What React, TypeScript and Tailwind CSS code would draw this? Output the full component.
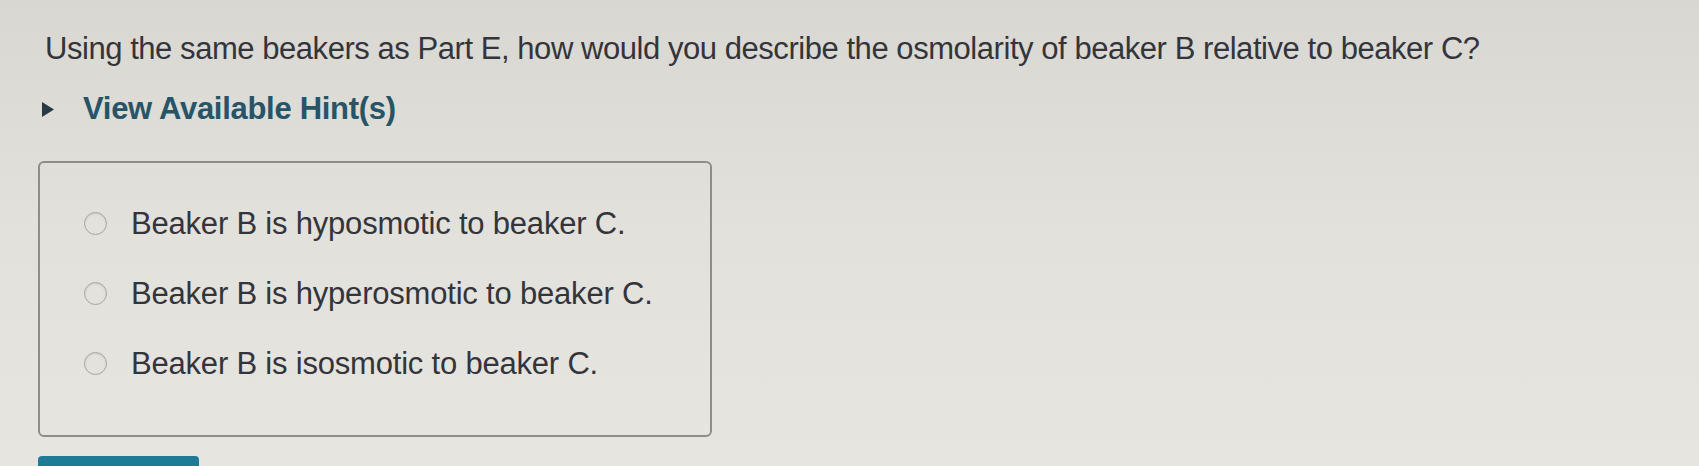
import React from "react";

const options = [
  "Beaker B is hyposmotic to beaker C.",
  "Beaker B is hyperosmotic to beaker C.",
  "Beaker B is isosmotic to beaker C.",
];

export default function App() {
  return (
    <div
      className="relative h-[466px] w-full overflow-hidden bg-gradient-to-b from-[#d8d7d2] via-[#e2e1dc] to-[#e6e5e0] text-[#34343b]"
      style={{ fontFamily: '"Liberation Sans", Arial, sans-serif' }}
    >
      <div className="flex flex-col pl-[45px] pt-[29px]">
        <p className="text-[31px] leading-[40px] tracking-[-0.45px]">
          Using the same beakers as Part E, how would you describe the osmolarity of beaker B relative to beaker C?
        </p>
        <div className="mt-[23px] flex items-center gap-[28px]">
          <svg width="14" height="17" viewBox="0 0 14 17" className="-ml-[4px] shrink-0">
            <path d="M1 1 L13 8.5 L1 16 Z" fill="#2a3a44" />
          </svg>
          <span className="text-[31px] font-bold leading-[34px] tracking-[-0.3px] text-[#285467]">View Available Hint(s)</span>
        </div>
        <div className="mt-[35px] -ml-[7px] flex h-[276px] w-[674px] flex-col gap-[37px] rounded-[6px] border-2 border-[#8e8d8a] pl-[44px] pt-[44px]">
          {options.map((o) => (
            <label key={o} className="flex items-center gap-[24px]">
              <span className="h-[23px] w-[23px] shrink-0 rounded-full border-[1.5px] border-[#a6a5a1] bg-[#e3e2dd] shadow-[inset_0_1px_2px_rgba(0,0,0,0.1)]" />
              <span className="text-[31px] leading-[33px] tracking-[-0.2px]">{o}</span>
            </label>
          ))}
        </div>
        <div className="mt-[19px] -ml-[7px] h-[30px] w-[161px] rounded-t-[4px] bg-[#1f7b95]" />
      </div>
    </div>
  );
}
